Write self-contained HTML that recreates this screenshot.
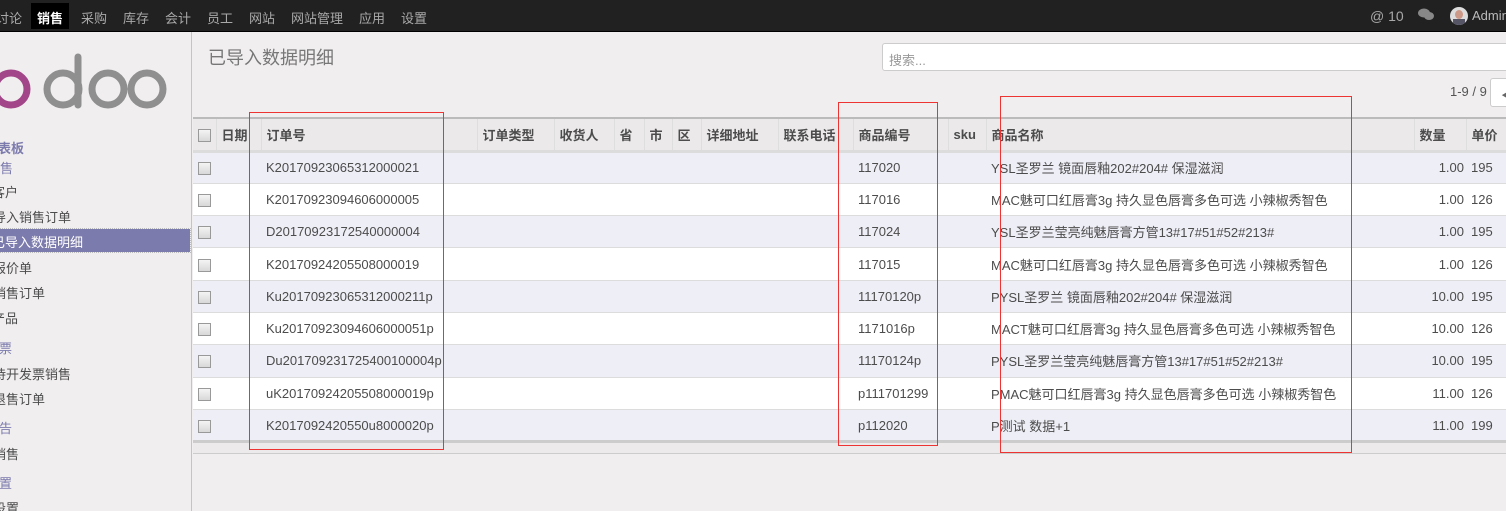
<!DOCTYPE html>
<html><head><meta charset="utf-8"><style>
*{margin:0;padding:0;box-sizing:border-box}
body{width:1506px;height:511px;overflow:hidden;background:#f0eeee;font-family:"Liberation Sans","Noto Sans CJK SC",sans-serif;font-size:13px;color:#4c4c4c;position:relative}
.nav{position:absolute;left:0;top:0;width:1506px;height:32px;background:#212121;border-bottom:1px solid #000}
.nav span{position:absolute;top:8px;color:#a9a9a9;font-size:13px}
.nav .act{background:#000;color:#fff;top:3px;height:26px;padding:5px 6px 0;font-weight:bold}
.side{position:absolute;left:0;top:32px;width:192px;height:479px;border-right:1px solid #c4c4c4;overflow:hidden}
.side div{position:absolute;font-size:13px;white-space:nowrap}
.sec{color:#7c7bad}
.it{color:#4c4c4c}
.actv{background:#7c7bad;color:#fff!important;width:190px;height:23px;padding-top:3px;outline:1px dotted #bbb}
.title{position:absolute;left:208px;top:44px;font-size:18px;color:#777}
.search{position:absolute;left:882px;top:43px;width:630px;height:28px;background:#fff;border:1px solid #ccc;border-radius:3px;color:#999;padding:6px 6px;font-size:13px}
.pager{position:absolute;left:1450px;top:84px;color:#555}
.pbtn{position:absolute;left:1490px;top:78px;width:30px;height:29px;background:#fff;border:1px solid #ccc;border-radius:3px}
table{position:absolute;left:193px;top:117px;border-collapse:collapse;table-layout:fixed;width:1340px}
th{height:33px;background:#ebe9e9;text-align:left;font-weight:bold;color:#4c4c4c;padding:0 5px;border-top:2px solid #bbb;border-bottom:3px solid #dcdcdc;border-left:1px solid #dedede;white-space:nowrap;overflow:hidden}
td{height:32.3px;padding:0 5px;border-top:1px solid #dcdcdc;white-space:nowrap;overflow:hidden}
tr.o td{background:#eeeef6}
tr.e td{background:#fff}
.cb{display:inline-block;width:13px;height:13px;border:1px solid #999;background:linear-gradient(#f4f4f4,#d8d8d8);vertical-align:middle}
.r{text-align:right;padding-right:2px}
.foot td{height:12px;background:#eceaea;border-top:3px solid #ccc;border-bottom:1px solid #ccc}
.box{position:absolute;border:1px solid #e33}
</style></head><body>
<div class="nav">
<span style="left:-4px">讨论</span>
<span class="act" style="left:31px">销售</span>
<span style="left:81px">采购</span>
<span style="left:123px">库存</span>
<span style="left:165px">会计</span>
<span style="left:207px">员工</span>
<span style="left:249px">网站</span>
<span style="left:291px">网站管理</span>
<span style="left:359px">应用</span>
<span style="left:401px">设置</span>
<span style="left:1370px;font-size:14px">@ 10</span>
<span style="left:1418px">
<svg width="16" height="14" viewBox="0 0 16 14"><ellipse cx="6" cy="5" rx="6" ry="4.5" fill="#888"/><ellipse cx="11" cy="8" rx="5" ry="4" fill="#888"/></svg></span>
<span style="left:1450px;top:7px;width:18px;height:18px;border-radius:50%;background:#ddd;overflow:hidden"><i style="position:absolute;left:5px;top:3px;width:8px;height:9px;border-radius:50%;background:#c98"></i><i style="position:absolute;left:3px;top:12px;width:12px;height:8px;background:#556"></i></span>
<span style="left:1472px;color:#bbb">Admin</span>
</div>
<div class="side">
<svg style="position:absolute;left:0;top:20px" width="170" height="60">
<circle cx="11" cy="37" r="16" fill="none" stroke="#a24689" stroke-width="7"/>
<circle cx="63" cy="37" r="16" fill="none" stroke="#8f8f8f" stroke-width="7"/>
<line x1="78" y1="5" x2="78" y2="53" stroke="#8f8f8f" stroke-width="7" stroke-linecap="round"/>
<circle cx="108" cy="37" r="16" fill="none" stroke="#8f8f8f" stroke-width="7"/>
<circle cx="147" cy="37" r="16" fill="none" stroke="#8f8f8f" stroke-width="7"/>
</svg>
<div class="sec" style="left:-15px;top:106px;font-weight:bold">仪表板</div>
<div class="sec" style="left:-13px;top:126px">销售</div>
<div class="it" style="left:-8px;top:150px">客户</div>
<div class="it" style="left:-7px;top:175px">导入销售订单</div>
<div class="it actv" style="left:0;top:197px"><span style="position:relative;left:-8px">已导入数据明细</span></div>
<div class="it" style="left:-7px;top:226px">报价单</div>
<div class="it" style="left:-7px;top:251px">销售订单</div>
<div class="it" style="left:-8px;top:276px">产品</div>
<div class="sec" style="left:-14px;top:306px">发票</div>
<div class="it" style="left:-7px;top:332px">待开发票销售</div>
<div class="it" style="left:-7px;top:357px">退售订单</div>
<div class="sec" style="left:-14px;top:386px">报告</div>
<div class="it" style="left:-7px;top:412px">销售</div>
<div class="sec" style="left:-14px;top:441px">配置</div>
<div class="it" style="left:-7px;top:466px">设置</div>
</div>
<div class="title">已导入数据明细</div>
<div class="search">搜索...</div>
<div class="pager">1-9 / 9</div>
<div class="pbtn"><span style="position:absolute;left:10px;top:6px;color:#666">◀</span></div>
<table>
<colgroup><col style="width:23px"><col style="width:45px"><col style="width:216px"><col style="width:77px"><col style="width:60px"><col style="width:30px"><col style="width:28px"><col style="width:29px"><col style="width:77px"><col style="width:75px"><col style="width:95px"><col style="width:38px"><col style="width:428px"><col style="width:52px"><col style="width:87px"></colgroup>
<tr><th style="border-left:none"><span class="cb"></span></th><th>日期</th><th>订单号</th><th>订单类型</th><th>收货人</th><th>省</th><th>市</th><th>区</th><th>详细地址</th><th>联系电话</th><th>商品编号</th><th>sku</th><th>商品名称</th><th>数量</th><th>单价</th></tr>
<tr class="o"><td><span class="cb"></span></td><td></td><td>K20170923065312000021</td><td></td><td></td><td></td><td></td><td></td><td></td><td></td><td>117020</td><td></td><td>YSL圣罗兰 镜面唇釉202#204# 保湿滋润</td><td class="r">1.00</td><td>195</td></tr>
<tr class="e"><td><span class="cb"></span></td><td></td><td>K20170923094606000005</td><td></td><td></td><td></td><td></td><td></td><td></td><td></td><td>117016</td><td></td><td>MAC魅可口红唇膏3g 持久显色唇膏多色可选 小辣椒秀智色</td><td class="r">1.00</td><td>126</td></tr>
<tr class="o"><td><span class="cb"></span></td><td></td><td>D20170923172540000004</td><td></td><td></td><td></td><td></td><td></td><td></td><td></td><td>117024</td><td></td><td>YSL圣罗兰莹亮纯魅唇膏方管13#17#51#52#213#</td><td class="r">1.00</td><td>195</td></tr>
<tr class="e"><td><span class="cb"></span></td><td></td><td>K20170924205508000019</td><td></td><td></td><td></td><td></td><td></td><td></td><td></td><td>117015</td><td></td><td>MAC魅可口红唇膏3g 持久显色唇膏多色可选 小辣椒秀智色</td><td class="r">1.00</td><td>126</td></tr>
<tr class="o"><td><span class="cb"></span></td><td></td><td>Ku20170923065312000211p</td><td></td><td></td><td></td><td></td><td></td><td></td><td></td><td>11170120p</td><td></td><td>PYSL圣罗兰 镜面唇釉202#204# 保湿滋润</td><td class="r">10.00</td><td>195</td></tr>
<tr class="e"><td><span class="cb"></span></td><td></td><td>Ku20170923094606000051p</td><td></td><td></td><td></td><td></td><td></td><td></td><td></td><td>1171016p</td><td></td><td>MACT魅可口红唇膏3g 持久显色唇膏多色可选 小辣椒秀智色</td><td class="r">10.00</td><td>126</td></tr>
<tr class="o"><td><span class="cb"></span></td><td></td><td>Du20170923172540010000​4p</td><td></td><td></td><td></td><td></td><td></td><td></td><td></td><td>11170124p</td><td></td><td>PYSL圣罗兰莹亮纯魅唇膏方管13#17#51#52#213#</td><td class="r">10.00</td><td>195</td></tr>
<tr class="e"><td><span class="cb"></span></td><td></td><td>uK20170924205508000019p</td><td></td><td></td><td></td><td></td><td></td><td></td><td></td><td>p111701299</td><td></td><td>PMAC魅可口红唇膏3g 持久显色唇膏多色可选 小辣椒秀智色</td><td class="r">11.00</td><td>126</td></tr>
<tr class="o"><td><span class="cb"></span></td><td></td><td>K2017092420550u8000020p</td><td></td><td></td><td></td><td></td><td></td><td></td><td></td><td>p112020</td><td></td><td>P测试 数据+1</td><td class="r">11.00</td><td>199</td></tr>
<tr class="foot"><td colspan="15"></td></tr>
</table>
<div class="box" style="left:249px;top:112px;width:195px;height:338px"></div>
<div class="box" style="left:838px;top:102px;width:100px;height:344px"></div>
<div class="box" style="left:1000px;top:96px;width:352px;height:357px"></div>
</body></html>
